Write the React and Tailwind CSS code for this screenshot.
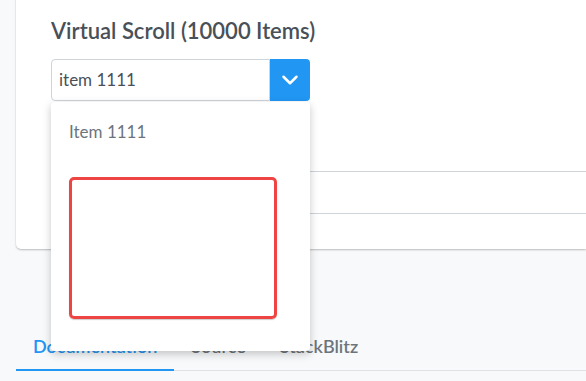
import React from "react";

function Chevron() {
  return (
    <svg width="26" height="26" viewBox="0 0 24 24" fill="none" stroke="white" strokeWidth="2.3" strokeLinecap="round" strokeLinejoin="round">
      <path d="M6 9l6 6 6-6" />
    </svg>
  );
}

export default function App() {
  return (
    <div className="w-[586px] h-[381px] overflow-hidden bg-[#f8f9fa] pl-4 text-[#495057]" style={{ fontFamily: "Lato, 'Open Sans', sans-serif" }}>
      <div className="-mt-4 bg-white rounded-bl-[5px] shadow-[0_1px_2px_rgba(0,0,0,0.25)] pl-[35px] pt-[34px] pb-[35px]">
        <h2 className="text-[22px] font-semibold leading-[26px] text-[#495057] h-[26px]">Virtual Scroll (10000 Items)</h2>
        <div className="relative mt-[15px] flex w-[259px] h-[42px]">
          <div className="flex-1 border border-[#ced4da] rounded-l-[4px] flex items-center pl-[7px] text-[17px] text-[#495057]">item 1111</div>
          <div className="w-[40px] bg-[#2196f3] rounded-r-[4px] flex items-center justify-center">
            <Chevron />
          </div>
          <div className="absolute left-0 top-[43px] w-[259px] h-[249px] bg-white rounded-[4px] shadow-[0_3px_8px_rgba(0,0,0,0.22)] z-10 flex flex-col">
            <div className="pl-[18px] pt-[19px] h-[44px] text-[17px] text-[#6c757d] leading-[22px]">Item 1111</div>
            <div className="ml-[18px] mt-[31px] w-[208px] h-[142px] border-[3px] border-[#ef4444] rounded-[5px] shadow-[0_1px_1px_rgba(0,0,0,0.2)]"></div>
          </div>
        </div>
        <div className="mt-[70px] h-[43px] border-t border-b border-[#ced4da]"></div>
      </div>
      <div className="mt-[85px] flex border-b border-[#dee2e6] text-[18px] font-semibold">
        <div className="px-[17px] pb-[11px] text-[#2196f3] border-b-2 border-[#2196f3] -mb-[1px] leading-[24px]">Documentation</div>
        <div className="px-[17px] pb-[11px] text-[#6c757d] leading-[24px]">Source</div>
        <div className="px-[17px] pb-[11px] text-[#6c757d] leading-[24px]">StackBlitz</div>
      </div>
    </div>
  );
}
